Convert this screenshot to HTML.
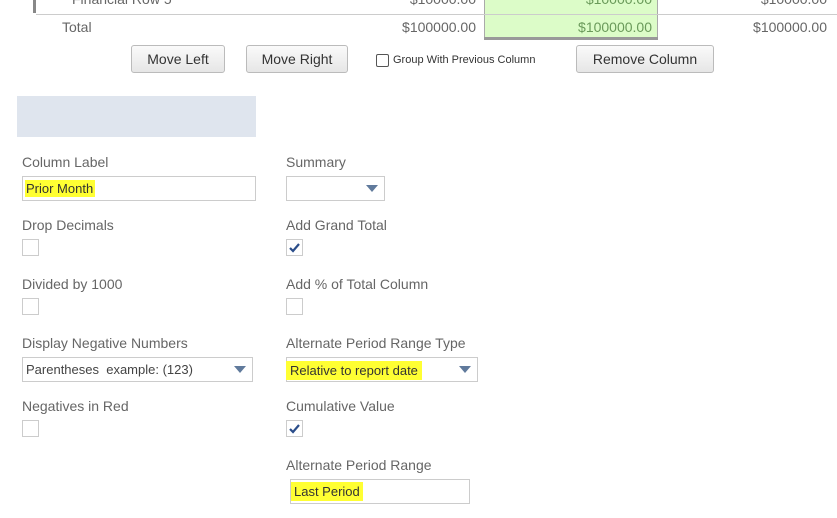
<!DOCTYPE html>
<html><head><style>
body{margin:0;width:837px;height:518px;background:#fff;position:relative;overflow:hidden;font-family:"Liberation Sans",sans-serif;color:#666;}
.a{position:absolute;white-space:nowrap;}
.lbl{font-size:14px;color:#666;margin-top:1px;}
.box{position:absolute;border:1px solid #ccc;background:#fff;box-sizing:border-box;}
.cb{position:absolute;width:17px;height:17px;border:1px solid #ccc;box-sizing:border-box;background:#fff;}
.btn{position:absolute;height:28px;box-sizing:border-box;border:1px solid #bbb;border-radius:3px;background:linear-gradient(#fafafa,#e6e6e6);font-size:14px;color:#333;text-align:center;line-height:26px;}
.hl{background:#ffff33;color:#333;}
.tri{position:absolute;width:0;height:0;border-left:6px solid transparent;border-right:6px solid transparent;border-top:7px solid #607a9c;}
.num{font-size:14px;color:#666;text-align:right;}
</style></head><body>
<div class="a" style="left:484px;top:0;width:172px;height:37px;background:#dcfcc8;border-left:1px solid #aaa;border-right:1px solid #aaa;"></div>
<div class="a" style="left:484px;top:37px;width:174px;height:3px;background:#999;"></div>
<div class="a" style="left:33px;top:0;width:3px;height:13px;background:#888;"></div>
<div class="a" style="left:36px;top:14px;width:801px;height:1px;background:#ccc;"></div>
<div class="a num" style="left:72px;top:-9px;">Financial Row 5</div>
<div class="a num" style="right:361px;top:-9px;">$10000.00</div>
<div class="a num" style="right:185px;top:-9px;color:#6a9a5a;">$10000.00</div>
<div class="a num" style="right:10px;top:-9px;">$10000.00</div>
<div class="a num" style="left:62px;top:19px;">Total</div>
<div class="a num" style="right:361px;top:19px;">$100000.00</div>
<div class="a num" style="right:185px;top:19px;color:#6a9a5a;">$100000.00</div>
<div class="a num" style="right:10px;top:19px;">$100000.00</div>
<div class="btn" style="left:131px;top:45px;width:94px;">Move Left</div>
<div class="btn" style="left:246px;top:45px;width:102px;">Move Right</div>
<div class="cb" style="left:376px;top:54px;width:13px;height:13px;border-color:#555;border-radius:2px;"></div>
<div class="a" style="left:393px;top:54px;font-size:11px;color:#333;">Group With Previous Column</div>
<div class="btn" style="left:576px;top:45px;width:138px;">Remove Column</div>
<div class="a" style="left:17px;top:96px;width:239px;height:41px;background:#dfe5ee;"></div>

<div class="a lbl" style="left:22px;top:153px;">Column Label</div>
<div class="box" style="left:22px;top:176px;width:234px;height:25px;"></div>
<div class="a hl" style="left:25px;top:180px;font-size:13px;padding:0 2px 0 1px;height:17px;line-height:17px;">Prior Month</div>
<div class="a lbl" style="left:286px;top:153px;">Summary</div>
<div class="box" style="left:286px;top:176px;width:99px;height:25px;"></div>
<div class="tri" style="left:366px;top:185px;"></div>

<div class="a lbl" style="left:22px;top:216px;">Drop Decimals</div>
<div class="cb" style="left:22px;top:239px;"></div>
<div class="a lbl" style="left:286px;top:216px;">Add Grand Total</div>
<div class="cb" style="left:286px;top:239px;"></div>
<svg class="a" style="left:286px;top:239px" width="17" height="17"><path d="M4 9 L7 12 L13 5" stroke="#2a4d8a" stroke-width="2.2" fill="none"/></svg>

<div class="a lbl" style="left:22px;top:275px;">Divided by 1000</div>
<div class="cb" style="left:22px;top:298px;"></div>
<div class="a lbl" style="left:286px;top:275px;">Add % of Total Column</div>
<div class="cb" style="left:286px;top:298px;"></div>

<div class="a lbl" style="left:22px;top:334px;">Display Negative Numbers</div>
<div class="box" style="left:22px;top:357px;width:231px;height:25px;"></div>
<div class="a" style="left:26px;top:362px;font-size:13px;color:#444;">Parentheses&nbsp; example: (123)</div>
<div class="tri" style="left:234px;top:366px;"></div>
<div class="a lbl" style="left:286px;top:334px;">Alternate Period Range Type</div>
<div class="box" style="left:286px;top:357px;width:192px;height:25px;"></div>
<div class="a hl" style="left:286px;top:361px;font-size:13px;padding:0 4px 0 4px;height:19px;line-height:19px;">Relative to report date</div>
<div class="tri" style="left:459px;top:366px;"></div>

<div class="a lbl" style="left:22px;top:397px;">Negatives in Red</div>
<div class="cb" style="left:22px;top:420px;"></div>
<div class="a lbl" style="left:286px;top:397px;">Cumulative Value</div>
<div class="cb" style="left:286px;top:420px;"></div>
<svg class="a" style="left:286px;top:420px" width="17" height="17"><path d="M4 9 L7 12 L13 5" stroke="#2a4d8a" stroke-width="2.2" fill="none"/></svg>

<div class="a lbl" style="left:286px;top:456px;">Alternate Period Range</div>
<div class="box" style="left:290px;top:479px;width:180px;height:25px;"></div>
<div class="a hl" style="left:291px;top:482px;font-size:13px;padding:0 3px 0 3px;height:19px;line-height:19px;">Last Period</div>
</body></html>
